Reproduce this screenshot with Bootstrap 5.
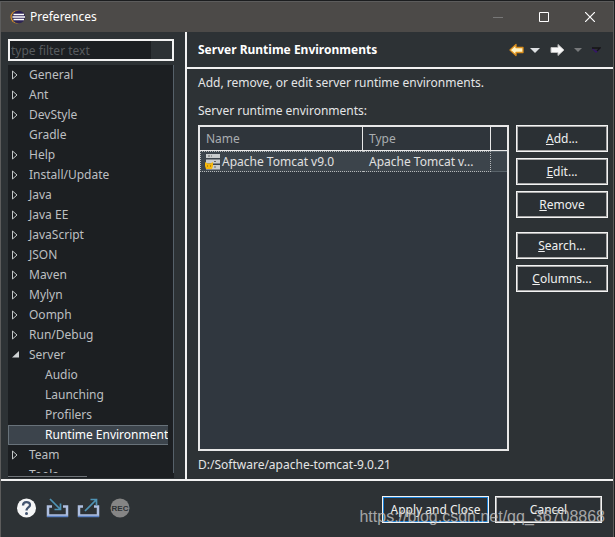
<!DOCTYPE html>
<html lang="en">
<head>
<meta charset="utf-8">
<meta name="viewport" content="width=device-width, initial-scale=1">
<title>Preferences</title>
<link href="https://cdn.jsdelivr.net/npm/bootstrap@5.3.0/dist/css/bootstrap.min.css" rel="stylesheet">
<style>
body{font:12px/20px "Noto Sans",sans-serif;background:#1b1d1f;color:#e4e5e6}
.window{border:solid #5c5c5c;border-width:1px 1px 0;margin:1px 1px 0 0;background:#2d3235}
.titlebar{background:#4c4a48;height:30px;padding-left:9px}
.titlebar h1{font-size:12px;font-weight:400;line-height:20px;color:#fff}
.bare{background:none;border:0;padding:0;line-height:0;color:#fff}
.winbtn{width:46px;height:30px}
.side{width:186px;padding:7px 11px 1px 7px;border-right:2px solid #f2f2f2}
.filter{height:22px;border:2px solid #f2f2f2;border-radius:0;outline:0;background:linear-gradient(90deg,#1c1f22 87%,#2d3235 87%);color:#ccc;padding:0 1px;width:100%;line-height:18px}
.filter::placeholder{color:#585c5f;opacity:1}
.tree{background:#1c1f22;margin-top:4px;color:#bcbfc1}
.rail{border-right:1px solid #56616a;padding-right:5px;flex:1 1 0;min-height:0}
.tree li{height:20px;padding-left:4px;white-space:nowrap;overflow:hidden;flex:none}
.tree svg{width:8px;height:10px;flex:none;margin-right:9px}
.tree .leaf{padding-left:21px}
.tree .child{padding-left:37px}
.tree .sel{background:#3c444c;border:1px solid #68727a;border-right:0;color:#fff;line-height:18px;padding-left:36px}
.hbar{height:1px;background:#70757a;width:79px;margin:3px 0 1px}
.heading{height:37px;border-bottom:2px solid #f2f2f2;padding:0 12px 0 11px}
.heading h2{font-size:12px;font-weight:700;color:#fff;line-height:20px}
.content{padding:4px 5px 4px 11px}
.grid{border:2px solid #e8e8e8;background:#30373f}
.grid table{table-layout:fixed;border-collapse:separate;border-spacing:0}
.grid th{font-weight:400;color:#a9adb0;height:24px;padding:0 6px;border-bottom:1px solid #e8e8e8;border-right:1px solid #e8e8e8;background:#2f353b}
.grid th:last-child{border-right:0}
.grid td{height:21px;padding:0 5px 0 6px;background:#3c444b;border-top:1px dotted #b5b8ba;border-bottom:1px dotted #b5b8ba;line-height:19px;color:#e0e0e0}
.grid td:first-child{border-left:1px dotted #b5b8ba;padding-left:4px}
.grid td:nth-child(2){border-right:1px dotted #b5b8ba}
.grid td:last-child{border-top:1px solid #59636a;border-bottom:1px solid #59636a}
.w-name{width:163px}
.w-type{width:128px}
.sidegap{gap:7px}
.iconrow{gap:2px}
.stack{gap:6px;width:92px}
.btn.sq{border:1px solid #f4f4f4;border-radius:0;background:#2b3034;color:#f0f0f0;font-size:12px;line-height:19px;padding:3px 0;height:27px;box-shadow:inset 0 0 0 1px #a9a9a9}
.btn.dflt{box-shadow:inset 0 0 0 1px #1a7fd4}
.foot{border-top:2px solid #f2f2f2;height:58px;padding:0 11px 0 15px}
.foot .sq{width:107px}
.tools{gap:8px;padding-bottom:2px}
.choices{gap:6px}
.stamp{position:absolute;right:8px;bottom:9px;font:16px/22px "Liberation Sans",sans-serif;color:#c4c4c4;opacity:.8;pointer-events:none}
</style>
<script src="https://cdn.jsdelivr.net/npm/bootstrap@5.3.0/dist/js/bootstrap.bundle.min.js"></script>
</head>
<body class="vh-100 d-flex flex-column overflow-hidden">
<svg width="0" height="0" class="position-absolute">
  <symbol id="closed" viewBox="0 0 8 10"><path d="M.5 1v8L5 5z" fill="none" stroke="#c4c8ca"/></symbol>
  <symbol id="open" viewBox="0 0 8 10"><path d="M7 1v6.500H0z" fill="#d0d3d5"/></symbol>
</svg>
<div class="window flex-grow-1 d-flex flex-column position-relative">
  <header class="titlebar d-flex align-items-center">
    <svg class="me-1" width="16" height="16" viewBox="0 0 16 16"><circle cx="7" cy="8" r="6.500" fill="#f59a23"/><circle cx="8" cy="8" r="6.500" fill="#4c4a48"/><circle cx="8.800" cy="8" r="6.200" fill="#2c2255"/><path d="M3.500 5.500h10.500M2.500 8h12.500M3.500 10.500h10.500" stroke="#fff" stroke-width="1.300"/></svg>
    <h1 class="m-0 flex-grow-1">Preferences</h1>
    <button class="bare winbtn" aria-label="Minimize" disabled><svg width="10" height="10"><path d="M0 5.500h10" stroke="#777"/></svg></button>
    <button class="bare winbtn" aria-label="Maximize"><svg width="10" height="10"><path d="M.5.5h9v9h-9z" fill="none" stroke="#fff"/></svg></button>
    <button class="bare winbtn" aria-label="Close"><svg width="10" height="10"><path d="M0 0l10 10M10 0L0 10" stroke="#fff" stroke-width="1.200"/></svg></button>
  </header>
  <main class="d-flex flex-grow-1">
    <nav class="side d-flex flex-column flex-shrink-0" aria-label="Preference pages">
      <input class="filter" type="text" placeholder="type filter text" aria-label="Filter">
      <div class="tree flex-grow-1 d-flex flex-column">
        <div class="rail d-flex overflow-hidden">
        <ul class="list-unstyled mb-0 w-100 d-flex flex-column">
          <li class="d-flex align-items-center"><svg><use href="#closed"/></svg>General</li>
          <li class="d-flex align-items-center"><svg><use href="#closed"/></svg>Ant</li>
          <li class="d-flex align-items-center"><svg><use href="#closed"/></svg>DevStyle</li>
          <li class="leaf">Gradle</li>
          <li class="d-flex align-items-center"><svg><use href="#closed"/></svg>Help</li>
          <li class="d-flex align-items-center"><svg><use href="#closed"/></svg>Install/Update</li>
          <li class="d-flex align-items-center"><svg><use href="#closed"/></svg>Java</li>
          <li class="d-flex align-items-center"><svg><use href="#closed"/></svg>Java EE</li>
          <li class="d-flex align-items-center"><svg><use href="#closed"/></svg>JavaScript</li>
          <li class="d-flex align-items-center"><svg><use href="#closed"/></svg>JSON</li>
          <li class="d-flex align-items-center"><svg><use href="#closed"/></svg>Maven</li>
          <li class="d-flex align-items-center"><svg><use href="#closed"/></svg>Mylyn</li>
          <li class="d-flex align-items-center"><svg><use href="#closed"/></svg>Oomph</li>
          <li class="d-flex align-items-center"><svg><use href="#closed"/></svg>Run/Debug</li>
          <li class="d-flex align-items-center"><svg><use href="#open"/></svg>Server</li>
          <li class="child">Audio</li>
          <li class="child">Launching</li>
          <li class="child">Profilers</li>
          <li class="child sel">Runtime Environment</li>
          <li class="d-flex align-items-center"><svg><use href="#closed"/></svg>Team</li>
          <li class="leaf">Tools</li>
        </ul>
        </div>
        <div class="hbar"></div>
      </div>
    </nav>
    <section class="flex-grow-1 d-flex flex-column">
      <div class="heading d-flex align-items-center">
        <h2 class="m-0 flex-grow-1">Server Runtime Environments</h2>
        <div class="d-flex align-items-center">
          <button class="bare me-1" aria-label="Back"><svg width="16" height="14" viewBox="0 0 16 14"><path d="M1 7l6-5.500V4.500h7v5H7v3z" fill="#fff3c4" stroke="#d98d1a" stroke-width="1.300" stroke-linejoin="round"/></svg></button>
          <button class="bare me-2" aria-label="Back history"><svg width="12" height="8"><path d="M1 2h10L6 7z" fill="#dde0e2"/></svg></button>
          <button class="bare me-2" aria-label="Forward"><svg width="16" height="14" viewBox="0 0 16 14"><path d="M15 7L9 1.500V4.500H2v5h7v3z" fill="#fafafa" stroke="#bbb" stroke-linejoin="round"/></svg></button>
          <button class="bare me-2" aria-label="Forward history"><svg width="10" height="8"><path d="M1 2h8L5 6z" fill="#77797b"/></svg></button>
          <button class="bare" aria-label="Menu"><svg width="10" height="8"><path d="M1 2L5 6 9 2" fill="none" stroke="#35156b" stroke-width="1.300"/><path d="M1 2h8L6 5" fill="none" stroke="#151515" stroke-width="1.400"/></svg></button>
        </div>
      </div>
      <div class="content flex-grow-1 d-flex flex-column">
        <p class="mb-2">Add, remove, or edit server runtime environments.</p>
        <p class="mb-1">Server runtime environments:</p>
        <div class="d-flex sidegap flex-grow-1">
          <div class="grid flex-grow-1">
            <table class="w-100">
              <thead><tr><th class="w-name">Name</th><th class="w-type">Type</th><th aria-label="Spare"></th></tr></thead>
              <tbody><tr>
                <td><div class="d-flex align-items-center iconrow"><svg width="15" height="16" viewBox="0 0 15 16"><path d="M1 0h14v4H1zM1 5.500h14v4H1zM1 11h14v4.500H1z" fill="#c9cccd"/><path d="M3 2h2M6 2h1M9 7.500h2M9 13h2" stroke="#666"/><path d="M0 8l2.500 1.500h3L8 8v4l-1 3H1l-1-3z" fill="#f6b80e"/><path d="M2 12h1M5 12h1" stroke="#8a5a00"/></svg>Apache Tomcat v9.0</div></td>
                <td>Apache Tomcat v...</td><td></td>
              </tr></tbody>
            </table>
          </div>
          <div class="stack d-flex flex-column flex-shrink-0">
            <button class="btn sq"><u>A</u>dd...</button>
            <button class="btn sq"><u>E</u>dit...</button>
            <button class="btn sq"><u>R</u>emove</button>
            <button class="btn sq mt-2"><u>S</u>earch...</button>
            <button class="btn sq"><u>C</u>olumns...</button>
          </div>
        </div>
        <p class="mb-0 mt-1">D:/Software/apache-tomcat-9.0.21</p>
      </div>
    </section>
  </main>
  <footer class="foot d-flex align-items-center justify-content-between">
    <div class="tools d-flex align-items-center">
    <button class="bare" aria-label="Help"><svg width="22" height="22" viewBox="0 0 22 22"><circle cx="10.500" cy="11" r="9.500" fill="#f5f6f7"/><path d="M7 8.500c0-4.500 7-4.500 7-.5 0 2.500-3.500 2.500-3.500 5.500" fill="none" stroke="#43546f" stroke-width="2.300"/><circle cx="10.500" cy="16.500" r="1.500" fill="#43546f"/></svg></button>
    <button class="bare" aria-label="Import"><svg width="23" height="20" viewBox="0 0 23 20"><path d="M6 8.500H2v9h19v-9h-4" fill="none" stroke="#aebfe0" stroke-width="2.500"/><path d="M1 18.500h21" stroke="#5b82c4" stroke-width="1.500"/><path d="M4 1l10 10M14.500 5.500v6h-6" fill="none" stroke="#4f93b5" stroke-width="1.700"/></svg></button>
    <button class="bare" aria-label="Export"><svg width="23" height="20" viewBox="0 0 23 20"><path d="M6 8.500H2v9h19v-9h-4" fill="none" stroke="#aebfe0" stroke-width="2.500"/><path d="M1 18.500h21" stroke="#5b82c4" stroke-width="1.500"/><path d="M8 13L19 2M13.500 1.500h6v6" fill="none" stroke="#4f93b5" stroke-width="1.700"/></svg></button>
    <button class="bare" aria-label="Record"><svg width="22" height="20" viewBox="0 0 22 20"><circle cx="12" cy="10" r="9.500" fill="#858585"/><text x="12" y="13" text-anchor="middle" font-family="Liberation Sans" font-weight="700" font-size="8" fill="#2d3235">REC</text></svg></button>
    </div>
    <div class="choices d-flex">
    <button class="btn sq dflt">Apply and Close</button>
    <button class="btn sq">Cancel</button>
    </div>
  </footer>
  <div class="stamp">https://blog.csdn.net/qq_36708868</div>
</div>
</body>
</html>
